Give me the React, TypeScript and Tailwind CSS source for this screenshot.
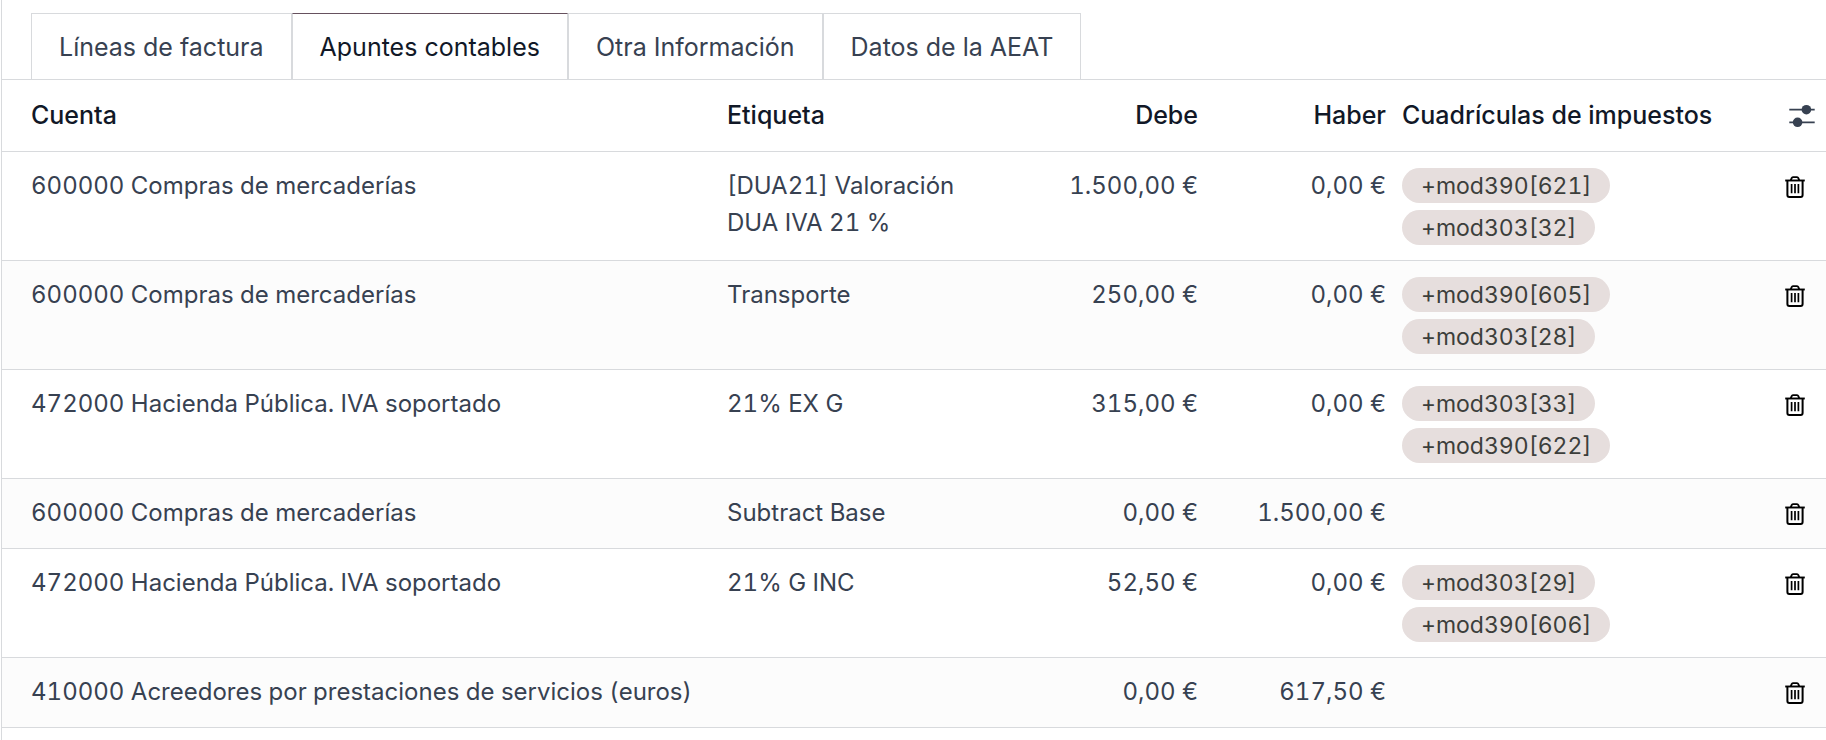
import clsx from 'clsx'

type Line = {
  account: string
  label: string
  debit: string
  credit: string
  grids: string[]
}

const TABS = ['Líneas de factura', 'Apuntes contables', 'Otra Información', 'Datos de la AEAT']
const ACTIVE_TAB = 'Apuntes contables'

const LINES: Line[] = [
  {
    account: '600000 Compras de mercaderías',
    label: '[DUA21] Valoración DUA IVA 21 %',
    debit: '1.500,00 €',
    credit: '0,00 €',
    grids: ['+mod390[621]', '+mod303[32]'],
  },
  {
    account: '600000 Compras de mercaderías',
    label: 'Transporte',
    debit: '250,00 €',
    credit: '0,00 €',
    grids: ['+mod390[605]', '+mod303[28]'],
  },
  {
    account: '472000 Hacienda Pública. IVA soportado',
    label: '21% EX G',
    debit: '315,00 €',
    credit: '0,00 €',
    grids: ['+mod303[33]', '+mod390[622]'],
  },
  {
    account: '600000 Compras de mercaderías',
    label: 'Subtract Base',
    debit: '0,00 €',
    credit: '1.500,00 €',
    grids: [],
  },
  {
    account: '472000 Hacienda Pública. IVA soportado',
    label: '21% G INC',
    debit: '52,50 €',
    credit: '0,00 €',
    grids: ['+mod303[29]', '+mod390[606]'],
  },
  {
    account: '410000 Acreedores por prestaciones de servicios (euros)',
    label: '',
    debit: '0,00 €',
    credit: '617,50 €',
    grids: [],
  },
]

function SlidersIcon() {
  return (
    <svg width="26" height="24" viewBox="0 0 26 24" fill="none" aria-hidden="true">
      <path d="M0.3 5.7h25.4M0.3 18.3h25.4" stroke="currentColor" strokeWidth="1.8" />
      <circle cx="17.4" cy="5.7" r="4.8" fill="currentColor" />
      <circle cx="8.6" cy="18.3" r="4.8" fill="currentColor" />
    </svg>
  )
}

function TrashIcon() {
  return (
    <svg width="20" height="22" viewBox="0 0 20 22" fill="none" stroke="currentColor" aria-hidden="true">
      <path d="M0.2 4.5h19.6" strokeWidth="1.9" />
      <path d="M5.8 4.4 6.7 2a1.4 1.4 0 0 1 1.3-.9h4a1.4 1.4 0 0 1 1.3.9l.9 2.4" strokeWidth="1.9" />
      <path d="M2.4 4.5v14.6a1.9 1.9 0 0 0 1.9 1.9h11.4a1.9 1.9 0 0 0 1.9-1.9V4.5" strokeWidth="2" />
      <path d="M6.6 8v9.2M10 8v9.2M13.4 8v9.2" strokeWidth="1.7" />
    </svg>
  )
}

function Notebook() {
  return (
    <div role="tablist" className="flex border-b border-[#d8dadd] pl-[29px] pt-[13px]">
      {TABS.map((tab) => {
        const active = tab === ACTIVE_TAB
        return (
          <button
            key={tab}
            type="button"
            role="tab"
            aria-selected={active}
            className={clsx(
              'border-x border-t border-[#d8dadd] px-[27px] pt-[15px] pb-[13px]',
              active ? 'border-t-[#66515e] text-[#111827]' : 'text-[#374151]',
            )}
          >
            {tab}
          </button>
        )
      })}
    </div>
  )
}

function LineRow({ line }: { line: Line }) {
  return (
    <tr className="border-b border-[#d8dadd] align-top even:bg-[#fcfcfc]">
      <td className="whitespace-nowrap pt-[15px] pb-[17px] pl-[29px]">{line.account}</td>
      <td className="px-2 pt-[15px] pb-[17px]">{line.label}</td>
      <td className="px-2 pt-[15px] pb-[17px] text-right">{line.debit}</td>
      <td className="px-2 pt-[15px] pb-[17px] text-right">{line.credit}</td>
      <td className="px-2 pt-4">
        {line.grids.length > 0 && (
          <div className="flex flex-col items-start gap-[7px] pb-[15px]">
            {line.grids.map((grid) => (
              <span
                key={grid}
                className="rounded-full bg-[#e6dedd] px-[19px] pt-[2px] text-[23px] leading-[33px] text-[#3c3e3b]"
              >
                {grid}
              </span>
            ))}
          </div>
        )}
      </td>
      <td className="pt-6 pl-[17px]">
        <button type="button" aria-label="Eliminar" className="block text-black">
          <TrashIcon />
        </button>
      </td>
    </tr>
  )
}

export default function App() {
  return (
    <main className="ml-px min-h-screen border-l border-[#d8dadd] bg-white font-['Inter',sans-serif] text-[25px] leading-[37px] text-[#374151]">
      <Notebook />
      <table className="w-full table-fixed border-collapse tabular-nums">
        <colgroup>
          <col />
          <col className="w-[291px]" />
          <col className="w-[196px]" />
          <col className="w-[188px]" />
          <col className="w-[374px]" />
          <col className="w-[58px]" />
        </colgroup>
        <thead>
          <tr className="border-b border-[#d8dadd] text-left text-[#111827]">
            <th className="py-[17px] pl-[29px] font-medium">Cuenta</th>
            <th className="px-2 font-medium">Etiqueta</th>
            <th className="px-2 text-right font-medium">Debe</th>
            <th className="px-2 text-right font-medium">Haber</th>
            <th className="px-2 font-medium">Cuadrículas de impuestos</th>
            <th className="pl-[21px]">
              <button type="button" aria-label="Columnas opcionales" className="block text-[#374151]">
                <SlidersIcon />
              </button>
            </th>
          </tr>
        </thead>
        <tbody className="text-2xl leading-[37px]">
          {LINES.map((line, i) => (
            <LineRow key={i} line={line} />
          ))}
        </tbody>
      </table>
    </main>
  )
}
